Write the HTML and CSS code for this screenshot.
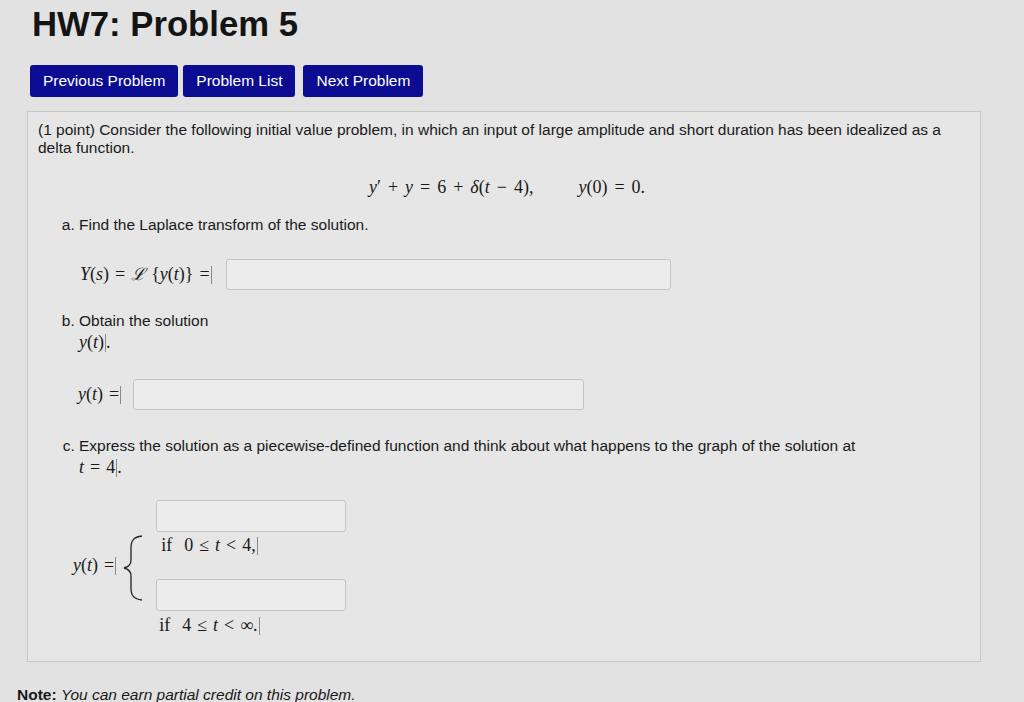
FILE: index.html
```html
<!DOCTYPE html>
<html>
<head>
<meta charset="utf-8">
<link rel="stylesheet" href="styles.css">
</head>
<body>
<h1 class="title">HW7: Problem 5</h1>
<div class="nav">
  <a class="btn">Previous Problem</a>
  <a class="btn">Problem List</a>
  <a class="btn btn-next">Next Problem</a>
</div>
<div class="problem">
  <p class="intro">(1 point) Consider the following initial value problem, in which an input of large amplitude and short duration has been idealized as a delta function.</p>
  <div class="eq"><span class="m"><i>y</i>′ + <i>y</i> = 6 + <i>δ</i>(<i>t</i> − 4),</span><span class="m eq-gap"><i>y</i>(0) = 0.</span></div>
  <ol class="parts">
    <li class="part part-a">Find the Laplace transform of the solution.
      <div class="row row-a"><span class="m"><i>Y</i>(<i>s</i>) = <span class="cal">ℒ</span>&nbsp;{<i>y</i>(<i>t</i>)} =<span class="bar"></span></span><span class="field field-a"></span></div>
    </li>
    <li class="part part-b">Obtain the solution
      <div class="m line"><i>y</i>(<i>t</i>)<span class="bar"></span>.</div>
      <div class="row row-b"><span class="m"><i>y</i>(<i>t</i>) =<span class="bar"></span></span><span class="field field-b"></span></div>
    </li>
    <li class="part part-c">Express the solution as a piecewise-defined function and think about what happens to the graph of the solution at
      <div class="m line"><i>t</i> = 4<span class="bar"></span>.</div>
      <div class="piece">
        <span class="m piece-label"><i>y</i>(<i>t</i>) =<span class="bar"></span></span>
        <svg class="brace" width="22" height="68" viewBox="0 0 22 68"><path d="M20 2 C12 3 9 6 9 14 L9 26 C9 31 6 33 2 34 C6 35 9 37 9 42 L9 54 C9 62 12 65 20 66" fill="none" stroke="#222" stroke-width="1.3"/></svg>
        <div class="cases">
          <span class="field field-p"></span>
          <div class="m cond">if&nbsp; 0 ≤ <i>t</i> &lt; 4,<span class="bar"></span></div>
          <span class="field field-p field-p2"></span>
          <div class="m cond cond2">if&nbsp; 4 ≤ <i>t</i> &lt; ∞.<span class="bar"></span></div>
        </div>
      </div>
    </li>
  </ol>
</div>
<p class="note"><b>Note:</b> <i>You can earn partial credit on this problem.</i></p>
</body>
</html>
```

FILE: styles.css
```css
html, body {
  margin: 0;
  padding: 0;
}
body {
  background: #e2e2e2;
  font-family: "Liberation Sans", Arial, sans-serif;
  color: #1a1a1a;
  font-size: 15.5px;
  line-height: 18px;
}
.title {
  margin: 0;
  padding: 4px 0 0 32px;
  font-size: 34.7px;
  line-height: 40px;
  font-weight: bold;
  color: #141414;
}
.nav {
  display: flex;
  gap: 5px;
  margin: 21px 0 0 30px;
}
.btn {
  display: block;
  background: #0c0c92;
  color: #fff;
  font-size: 15.5px;
  line-height: 18px;
  padding: 7px 13px;
  border-radius: 3px;
}
.btn-next {
  margin-left: 3px;
}
.problem {
  margin: 14px 0 0 27px;
  width: 932px;
  border: 1px solid #c6c6c6;
  background: #e6e6e6;
  padding: 9px 10px 26px 10px;
}
.intro {
  margin: 0;
}
.m {
  font-family: "Liberation Serif", "Times New Roman", serif;
  font-size: 18px;
  color: #1a1a1a;
  word-spacing: 1.5px;
}
.m i {
  font-style: italic;
}
.cal {
  font-family: "DejaVu Serif", serif;
  font-size: 17px;
  font-style: italic;
}
.bar {
  display: inline-block;
  width: 1px;
  height: 18px;
  background: #8a8a8a;
  vertical-align: -4px;
  margin-left: 1px;
}
.eq {
  margin-top: 20px;
  text-align: center;
  line-height: 20px;
  padding-left: 6px;
}
.eq .m {
  word-spacing: 2.5px;
}
.eq-gap {
  margin-left: 45px;
}
.parts {
  list-style-type: lower-alpha;
  margin: 0;
  padding: 0 0 0 41px;
}
.part-a { margin-top: 18px; }
.part-b { margin-top: 22px; }
.part-c { margin-top: 27px; }
.row {
  display: flex;
  align-items: center;
}
.row-a { margin-top: 25px; margin-left: 1px; }
.row-b { margin-top: 27px; margin-left: -1px; }
.field {
  display: block;
  height: 29px;
  background: #ececec;
  border: 1px solid #c3c3c3;
  border-radius: 3px;
}
.field-a { width: 443px; margin-left: 14px; }
.field-b { width: 449px; margin-left: 12px; }
.line {
  margin-top: 3px;
  line-height: 18px;
}
.piece {
  display: flex;
  align-items: center;
  margin: 23px 0 0 -6px;
}
.piece-label {
  margin-top: -4px;
}
.brace {
  display: block;
  margin: 0 0 0 6px;
}
.cases {
  display: flex;
  flex-direction: column;
  align-items: flex-start;
  margin-left: 12px;
}
.field-p {
  width: 188px;
  height: 30px;
}
.cond {
  margin: 3px 0 0 5px;
  line-height: 20px;
}
.field-p2 {
  margin-top: 24px;
}
.cond2 {
  margin: 4px 0 0 3px;
}
.note {
  margin: 24px 0 0 17px;
}
.note i {
  font-style: italic;
}
```
